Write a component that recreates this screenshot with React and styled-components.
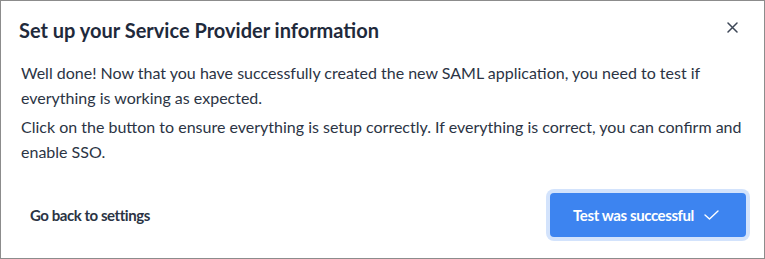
import React from "react";
import styled, { createGlobalStyle } from "styled-components";

const Global = createGlobalStyle`
  html, body { margin: 0; padding: 0; background: #ffffff; }
  body { font-family: Lato, "Open Sans", Arial, sans-serif; }
  * { box-sizing: border-box; }
`;

const Dialog = styled.div`
  width: 765px;
  height: 259px;
  border: 1px solid #8c8c8c;
  background: #ffffff;
  display: flex;
  flex-direction: column;
  font-family: Lato, "Open Sans", Arial, sans-serif;
`;

const Header = styled.div`
  display: flex;
  align-items: center;
  justify-content: space-between;
  padding: 15px 23px 0 18px;
`;

const Title = styled.h2`
  margin: 0;
  font-size: 20px;
  line-height: 28px;
  font-weight: 700;
  color: #1f2a3c;
`;

const CloseButton = styled.button`
  border: 0;
  background: transparent;
  padding: 0;
  width: 18px;
  height: 18px;
  display: flex;
  align-items: center;
  justify-content: center;
  color: #3d4757;
  cursor: pointer;
  margin-top: -5px;
`;

const Body = styled.div`
  padding: 16px 20px 0 20px;
  display: flex;
  flex-direction: column;
  gap: 4px;
`;

const Paragraph = styled.p`
  margin: 0;
  font-size: 16px;
  line-height: 25px;
  color: #2b3444;
`;

const Footer = styled.div`
  margin-top: auto;
  display: flex;
  align-items: center;
  justify-content: space-between;
  padding: 0 18px 21px 19px;
`;

const LinkButton = styled.button`
  border: 0;
  background: transparent;
  padding: 10px;
  font-family: inherit;
  font-size: 15px;
  font-weight: 700;
  letter-spacing: -0.45px;
  color: #2b3444;
  cursor: pointer;
`;

const PrimaryButton = styled.button`
  width: 196px;
  height: 44px;
  border: 0;
  border-radius: 4px;
  background: #3d84f0;
  box-shadow: 0 0 0 4px #d3e3fc;
  color: #ffffff;
  font-family: inherit;
  font-size: 15px;
  font-weight: 700;
  letter-spacing: -0.4px;
  display: flex;
  align-items: center;
  justify-content: center;
  gap: 10px;
  padding: 0 4px 0 0;
  cursor: pointer;
`;

const CloseIcon = () => (
  <svg width="11" height="11" viewBox="0 0 11 11" fill="none">
    <path d="M1 1 L10 10 M10 1 L1 10" stroke="currentColor" strokeWidth="1.5" strokeLinecap="round" />
  </svg>
);

const CheckIcon = () => (
  <svg width="15" height="10" viewBox="0 0 15 10" fill="none">
    <path d="M1 5 L5.5 9 L14 1" stroke="#ffffff" strokeWidth="1.4" strokeLinecap="round" strokeLinejoin="round" />
  </svg>
);

export default function App() {
  return (
    <>
      <Global />
      <Dialog>
        <Header>
          <Title>Set up your Service Provider information</Title>
          <CloseButton aria-label="Close">
            <CloseIcon />
          </CloseButton>
        </Header>
        <Body>
          <Paragraph>
            Well done! Now that you have successfully created the new SAML application, you need to test if
            everything is working as expected.
          </Paragraph>
          <Paragraph>
            Click on the button to ensure everything is setup correctly. If everything is correct, you can confirm and
            enable SSO.
          </Paragraph>
        </Body>
        <Footer>
          <LinkButton>Go back to settings</LinkButton>
          <PrimaryButton>
            Test was successful
            <CheckIcon />
          </PrimaryButton>
        </Footer>
      </Dialog>
    </>
  );
}
